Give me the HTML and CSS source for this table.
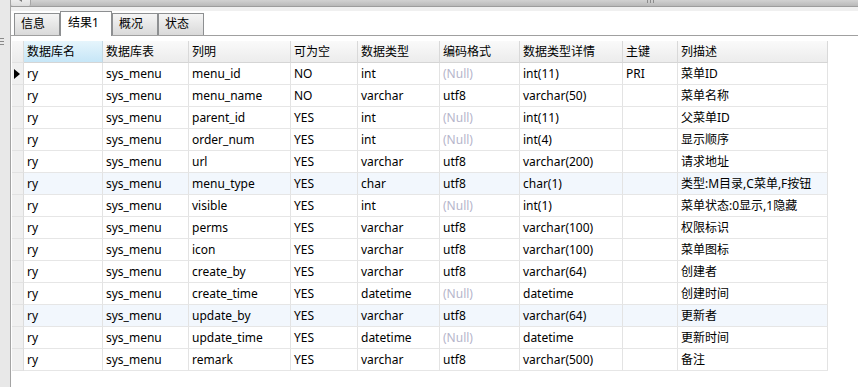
FILE: index.html
```html
<!DOCTYPE html>
<html lang="zh">
<head>
<meta charset="utf-8">
<title>结果1</title>
<link rel="stylesheet" href="styles.css">
</head>
<body>
<div class="app">
  <aside class="side"><span class="grip"></span></aside>
  <div class="main">
    <div class="hscroll">
      <span class="hs-btn"><span class="hs-arrow"></span></span>
      <span class="hs-thumb"><span class="hs-grip"></span></span>
    </div>
    <div class="band"></div>
    <div class="tabs">
      <div class="tab">信息</div>
      <div class="tab active">结果1</div>
      <div class="tab">概况</div>
      <div class="tab">状态</div>
    </div>
    <div class="grid-wrap">
      <table class="grid">
        <thead>
          <tr>
            <th class="rh w-rh"></th>
            <th class="w1 sorted">数据库名</th>
            <th class="w2">数据库表</th>
            <th class="w3">列明</th>
            <th class="w4">可为空</th>
            <th class="w5">数据类型</th>
            <th class="w6">编码格式</th>
            <th class="w7">数据类型详情</th>
            <th class="w8">主键</th>
            <th class="w9">列描述</th>
          </tr>
        </thead>
        <tbody>
          <tr><td class="rh"><span class="mark"></span></td><td>ry</td><td>sys_menu</td><td>menu_id</td><td>NO</td><td>int</td><td class="null">(Null)</td><td>int(11)</td><td>PRI</td><td>菜单ID</td></tr>
          <tr><td class="rh"></td><td>ry</td><td>sys_menu</td><td>menu_name</td><td>NO</td><td>varchar</td><td>utf8</td><td>varchar(50)</td><td></td><td>菜单名称</td></tr>
          <tr><td class="rh"></td><td>ry</td><td>sys_menu</td><td>parent_id</td><td>YES</td><td>int</td><td class="null">(Null)</td><td>int(11)</td><td></td><td>父菜单ID</td></tr>
          <tr><td class="rh"></td><td>ry</td><td>sys_menu</td><td>order_num</td><td>YES</td><td>int</td><td class="null">(Null)</td><td>int(4)</td><td></td><td>显示顺序</td></tr>
          <tr><td class="rh"></td><td>ry</td><td>sys_menu</td><td>url</td><td>YES</td><td>varchar</td><td>utf8</td><td>varchar(200)</td><td></td><td>请求地址</td></tr>
          <tr class="hl"><td class="rh"></td><td>ry</td><td>sys_menu</td><td>menu_type</td><td>YES</td><td>char</td><td>utf8</td><td>char(1)</td><td></td><td>类型:M目录,C菜单,F按钮</td></tr>
          <tr><td class="rh"></td><td>ry</td><td>sys_menu</td><td>visible</td><td>YES</td><td>int</td><td class="null">(Null)</td><td>int(1)</td><td></td><td>菜单状态:0显示,1隐藏</td></tr>
          <tr><td class="rh"></td><td>ry</td><td>sys_menu</td><td>perms</td><td>YES</td><td>varchar</td><td>utf8</td><td>varchar(100)</td><td></td><td>权限标识</td></tr>
          <tr><td class="rh"></td><td>ry</td><td>sys_menu</td><td>icon</td><td>YES</td><td>varchar</td><td>utf8</td><td>varchar(100)</td><td></td><td>菜单图标</td></tr>
          <tr><td class="rh"></td><td>ry</td><td>sys_menu</td><td>create_by</td><td>YES</td><td>varchar</td><td>utf8</td><td>varchar(64)</td><td></td><td>创建者</td></tr>
          <tr><td class="rh"></td><td>ry</td><td>sys_menu</td><td>create_time</td><td>YES</td><td>datetime</td><td class="null">(Null)</td><td>datetime</td><td></td><td>创建时间</td></tr>
          <tr class="hl"><td class="rh"></td><td>ry</td><td>sys_menu</td><td>update_by</td><td>YES</td><td>varchar</td><td>utf8</td><td>varchar(64)</td><td></td><td>更新者</td></tr>
          <tr><td class="rh"></td><td>ry</td><td>sys_menu</td><td>update_time</td><td>YES</td><td>datetime</td><td class="null">(Null)</td><td>datetime</td><td></td><td>更新时间</td></tr>
          <tr><td class="rh"></td><td>ry</td><td>sys_menu</td><td>remark</td><td>YES</td><td>varchar</td><td>utf8</td><td>varchar(500)</td><td></td><td>备注</td></tr>
        </tbody>
      </table>
    </div>
  </div>
</div>
</body>
</html>
```

FILE: styles.css
```css
* { box-sizing: border-box; }

html, body {
  margin: 0;
  padding: 0;
  background: #fff;
}

body {
  font-family: "Noto Sans", "Noto Sans CJK SC", sans-serif;
  font-size: 12px;
  color: #000;
}

.app {
  display: flex;
  height: 387px;
  overflow: hidden;
}

/* left splitter strip */
.side {
  width: 11px;
  flex: none;
  background: #e8e8e8;
  border-right: 1px solid #a4a4a4;
  display: flex;
  flex-direction: column;
}

.grip {
  margin-top: 38px;
  width: 4px;
  height: 8px;
  background: repeating-linear-gradient(#8a8a8a 0 1px, transparent 1px 3px);
}

.main {
  flex: 1;
  min-width: 0;
  display: flex;
  flex-direction: column;
}

/* cut-off horizontal scrollbar of the pane above */
.hscroll {
  height: 7px;
  flex: none;
  display: flex;
  border-bottom: 1px solid #9d9d9d;
  background: linear-gradient(#d2d2d2, #b9b9b9);
}

.hs-btn {
  width: 20px;
  flex: none;
  background: linear-gradient(#ececec, #dcdcdc);
  border-right: 1px solid #a6a6a6;
  border-radius: 0 0 2px 2px;
  display: flex;
  justify-content: center;
}

.hs-arrow {
  width: 0;
  height: 0;
  border-right: 3px solid #7a7a7a;
  border-top: 2px solid transparent;
  border-bottom: 2px solid transparent;
  margin-top: -2px;
}

.hs-thumb {
  flex: 1;
  display: flex;
}

.hs-grip {
  margin-left: 616px;
  width: 7px;
  height: 3px;
  background: repeating-linear-gradient(90deg, #8c8c8c 0 1px, transparent 1px 3px);
}

.band {
  height: 4px;
  flex: none;
  background: #f0f0f0;
}

/* tab strip */
.tabs {
  height: 25px;
  flex: none;
  display: flex;
  align-items: flex-end;
  padding-left: 3px;
  border-bottom: 1px solid #a0a0a0;
}

.tab {
  height: 22px;
  line-height: 20px;
  padding: 0 14px 0 6px;
  border: 1px solid #8d8f91;
  border-bottom: none;
  background: linear-gradient(#f5f5f5, #d9d9d9);
  white-space: nowrap;
}

.tab.active {
  height: 25px;
  margin-bottom: -1px;
  line-height: 21px;
  padding: 0 12px 0 7px;
  background: #fff;
}

/* result grid */
.grid-wrap {
  margin-top: 5px;
  padding-left: 1px;
}

.grid {
  table-layout: fixed;
  border-collapse: separate;
  border-spacing: 0;
  width: 816px;
}

.grid th,
.grid td {
  height: 22px;
  padding: 0 2px 0 3px;
  text-align: left;
  font-weight: normal;
  white-space: nowrap;
  overflow: hidden;
  line-height: 21px;
  border-right: 1px solid #e3e3e3;
  border-bottom: 1px solid #e6e6e6;
}

.grid th {
  background: linear-gradient(#fafafa, #ececec);
  border-right-color: #d9d9d9;
  border-bottom-color: #d5d5d5;
}

.grid th.sorted {
  background: linear-gradient(#e6f5fc, #c6e6f7);
  border-right-color: #c4d8e3;
}

.w-rh { width: 12px; }
.w1 { width: 79px; }
.w2 { width: 86px; }
.w3 { width: 102px; }
.w4 { width: 67px; }
.w5 { width: 82px; }
.w6 { width: 80px; }
.w7 { width: 103px; }
.w8 { width: 55px; }
.w9 { width: 150px; }

.grid .rh {
  padding: 0 0 0 2px;
  background: #f0f0f0;
  border-right-color: #dcdcdc;
  border-bottom-color: #e2e2e2;
}

.grid th.rh {
  background: linear-gradient(#f7f7f7, #ececec);
}

.mark {
  display: inline-block;
  vertical-align: middle;
  width: 0;
  height: 0;
  border-left: 6px solid #000;
  border-top: 5px solid transparent;
  border-bottom: 5px solid transparent;
  margin-top: -2px;
}

.grid tr.hl td {
  background: #f2f7fd;
}

.grid tr.hl td.rh {
  background: #f0f0f0;
}

.grid td.null {
  color: #b5b5cb;
}
```
